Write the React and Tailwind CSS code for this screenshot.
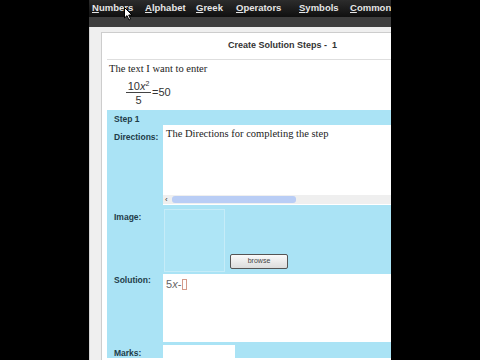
export default function App() {
  const sans = "font-['Liberation_Sans',Arial,sans-serif]";
  const serif = "font-['Liberation_Serif','Times_New_Roman',serif]";
  const label = `w-[56px] shrink-0 pl-[7px] text-[8.5px] font-bold text-[#1e3c48] leading-[10px] ${sans}`;
  return (
    <div className="w-[480px] h-[360px] bg-black overflow-hidden relative flex">
      <div className="ml-[89px] w-[302px] h-full flex flex-col overflow-hidden">
        {/* menu bar */}
        <div className={`h-[17px] shrink-0 bg-gradient-to-b from-[#2c2c2c] to-[#101010] flex items-center pl-[3px] text-[9.5px] font-bold text-[#e6e6e6] whitespace-nowrap ${sans}`}>
          <span className="w-[53px] shrink-0"><span className="underline">N</span>umbers</span>
          <span className="w-[51px] shrink-0"><span className="underline">A</span>lphabet</span>
          <span className="w-[40px] shrink-0"><span className="underline">G</span>reek</span>
          <span className="w-[63px] shrink-0"><span className="underline">O</span>perators</span>
          <span className="w-[51px] shrink-0"><span className="underline">S</span>ymbols</span>
          <span className="shrink-0"><span className="underline">C</span>ommon</span>
        </div>
        <div className="h-[10px] shrink-0 bg-[#3e3e3e]" />
        {/* page frame */}
        <div className="flex-1 bg-[#efefef] border-l border-[#d4d4d4] pl-[11px] pt-[5px] flex flex-col">
          <div className="flex-1 bg-white border-l border-t border-[#cdcdcd] pl-[5px] flex flex-col">
            <div className={`h-[27px] shrink-0 border-b border-[#dedede] flex items-center pl-[121px] text-[9px] font-bold text-[#333] whitespace-nowrap ${sans}`}>
              Create Solution Steps -&nbsp; 1
            </div>
            <div className={`pt-[3px] pl-[2px] text-[10.5px] leading-[12px] text-[#222] ${serif}`}>The text I want to enter</div>
            <div className={`ml-[19px] mt-[2px] h-[31px] flex items-center text-[11px] text-[#333] ${sans}`}>
              <div className="flex flex-col items-center">
                <div className="leading-[12px] px-[1px]">10<i>x</i><sup className="text-[7px]">2</sup></div>
                <div className="w-[25px] border-t border-[#444]" />
                <div className="leading-[12px] mt-[1px]">5</div>
              </div>
              <div className="ml-[1px]">=50</div>
            </div>
            {/* blue step section */}
            <div className="mt-[2px] h-[248px] shrink-0 bg-[#aae3f5] flex flex-col">
              <div className="h-[15px] flex">
                <div className={`${label} pt-[4px]`}>Step 1</div>
              </div>
              <div className="h-[80px] flex">
                <div className={`${label} pt-[7px]`}>Directions:</div>
                <div className="flex-1 bg-white flex flex-col">
                  <div className={`flex-1 pt-[3px] pl-[3px] text-[10.5px] leading-[12px] text-[#222] whitespace-nowrap ${serif}`}>The Directions for completing the step</div>
                  <div className="h-[9px] mb-[1px] bg-[#efefef] flex items-center">
                    <span className={`w-[9px] text-[8px] leading-[8px] text-[#333] pl-[2px] ${sans}`}>&lsaquo;</span>
                    <div className="w-[124px] h-[7px] rounded-[3px] bg-[#b9cdf5]" />
                  </div>
                </div>
              </div>
              <div className="h-[63px] mt-[4px] flex">
                <div className={`${label} pt-[3px]`}>Image:</div>
                <div className="w-[61px] h-full ml-[1px] border border-[#c6ecf8] bg-[#aee5f6]" />
                <div className="ml-[5px] self-end mb-[3px] w-[58px] h-[15px] rounded-[2px] border border-[#555] bg-gradient-to-b from-[#fafafa] to-[#dcdcdc] flex items-center justify-center">
                  <span className={`text-[7px] text-[#444] ${sans}`}>browse</span>
                </div>
              </div>
              <div className="h-[68px] mt-[2px] flex">
                <div className={`${label} pt-[1px]`}>Solution:</div>
                <div className={`flex-1 bg-white pt-[4px] pl-[3px] text-[11px] leading-[13px] text-[#666] ${sans}`}>
                  <span>5<i>x</i>-</span>
                  <span className="inline-block align-middle w-[5px] h-[11px] border border-[#d49a8a] ml-[1px] relative -top-[1px]" />
                </div>
              </div>
              <div className="h-[13px] mt-[3px] flex">
                <div className={`${label} pt-[3px]`}>Marks:</div>
                <div className="w-[72px] bg-white" />
              </div>
            </div>
          </div>
        </div>
      </div>
      {/* mouse cursor */}
      <svg className="absolute left-[124px] top-[7px]" width="9" height="14" viewBox="0 0 9 14">
        <path d="M0.5 0.5 L0.5 11 L3 8.6 L5 13 L6.6 12.2 L4.7 8 L8 8 Z" fill="#fff" stroke="#000" strokeWidth="1" />
      </svg>
    </div>
  );
}
